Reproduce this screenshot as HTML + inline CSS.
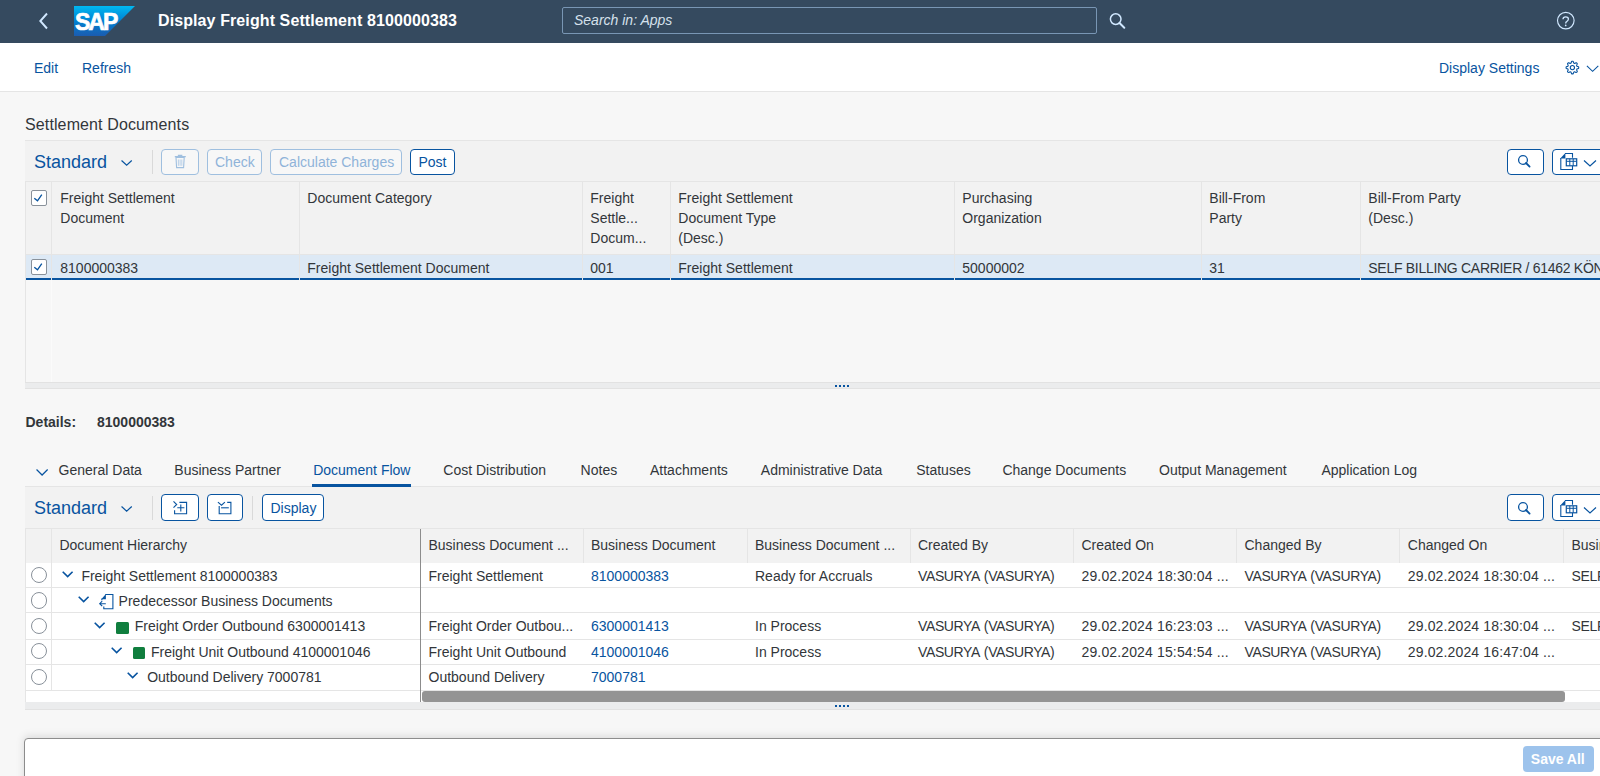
<!DOCTYPE html>
<html><head><meta charset="utf-8">
<style>
*{box-sizing:border-box;margin:0;padding:0}
html,body{width:1600px;height:776px;overflow:hidden;background:#f7f7f7;font-family:"Liberation Sans",sans-serif;color:#32363a}
.a{position:absolute}
.t{position:absolute;white-space:nowrap;font-size:14px;line-height:20px}
</style></head><body>
<div class="a" style="left:0px;top:0px;width:1600px;height:43px;background:#354a5f"></div>
<svg class="a" style="left:36px;top:10px" width="16" height="22" viewBox="0 0 16 22"><path d="M11 3.5 L4.3 11 L11 18.5" fill="none" stroke="#d1e8ff" stroke-width="1.9"/></svg>
<svg class="a" style="left:74px;top:6px" width="62" height="30" viewBox="0 0 62 30">
<defs><linearGradient id="sg" x1="0" y1="0" x2="0" y2="1"><stop offset="0" stop-color="#00b8f1"/><stop offset="0.5" stop-color="#0081d2"/><stop offset="1" stop-color="#1b5cb0"/></linearGradient></defs>
<path d="M0 0 H61 L31 30 H0 Z" fill="url(#sg)"/>
<text x="1" y="24" font-family="Liberation Sans" font-weight="700" font-size="23" fill="#fff" stroke="#fff" stroke-width="0.7" letter-spacing="-2" transform="scale(1,1)">SAP</text>
</svg>
<div class="t" style="left:158px;top:11.06px;font-size:16px;line-height:20px;color:#fff;font-weight:700;letter-spacing:0.1px;">Display Freight Settlement 8100000383</div>
<div class="a" style="left:562px;top:7px;width:535px;height:27px;border:1px solid #7996b4;border-radius:2px"></div>
<div class="t" style="left:574px;top:10.25px;color:#d5e1ec;font-style:italic;">Search in: Apps</div>
<svg class="a" style="left:1106px;top:10px" width="22" height="22" viewBox="0 0 22 22"><circle cx="9.7" cy="9.1" r="5.3" fill="none" stroke="#d1e8ff" stroke-width="1.5"/><path d="M13.5 13 L18.3 17.7" stroke="#d1e8ff" stroke-width="2" stroke-linecap="round"/></svg>
<svg class="a" style="left:1550px;top:5px" width="32" height="32" viewBox="1550 5 32 32"><circle cx="1565.8" cy="20.6" r="8.3" fill="none" stroke="#d1e8ff" stroke-width="1.15"/><path d="M1563 19.2 C1563 17.6 1564.1 16.9 1565.7 16.9 C1567.3 16.9 1568.4 17.8 1568.4 19.1 C1568.4 20.4 1567.4 21 1566.6 21.6 C1565.9 22.1 1565.7 22.6 1565.7 23.6" fill="none" stroke="#d1e8ff" stroke-width="1.3"/><circle cx="1565.7" cy="25.4" r="0.85" fill="#d1e8ff"/></svg>
<div class="a" style="left:0px;top:43px;width:1600px;height:48px;background:#fff"></div>
<div class="a" style="left:0px;top:91px;width:1600px;height:1px;background:#e5e5e5"></div>
<div class="t" style="left:34px;top:57.65px;color:#0854a0;">Edit</div>
<div class="t" style="left:82px;top:57.65px;color:#0854a0;">Refresh</div>
<div class="t" style="left:1439px;top:57.65px;color:#0854a0;">Display Settings</div>
<svg class="a" style="left:1560px;top:55px" width="26" height="26" viewBox="1560 55 26 26"><path d="M1572.40 61.30 L1572.81 61.31 L1573.20 61.49 L1573.47 62.21 L1573.65 62.93 L1573.91 63.15 L1574.20 63.26 L1574.48 63.38 L1574.82 63.41 L1575.46 63.03 L1576.15 62.71 L1576.55 62.86 L1576.85 63.15 L1577.14 63.45 L1577.29 63.85 L1576.97 64.54 L1576.59 65.18 L1576.62 65.52 L1576.74 65.80 L1576.85 66.09 L1577.07 66.35 L1577.79 66.53 L1578.51 66.80 L1578.69 67.19 L1578.70 67.60 L1578.69 68.01 L1578.51 68.40 L1577.79 68.67 L1577.07 68.85 L1576.85 69.11 L1576.74 69.40 L1576.62 69.68 L1576.59 70.02 L1576.97 70.66 L1577.29 71.35 L1577.14 71.75 L1576.85 72.05 L1576.55 72.34 L1576.15 72.49 L1575.46 72.17 L1574.82 71.79 L1574.48 71.82 L1574.20 71.94 L1573.91 72.05 L1573.65 72.27 L1573.47 72.99 L1573.20 73.71 L1572.81 73.89 L1572.40 73.90 L1571.99 73.89 L1571.60 73.71 L1571.33 72.99 L1571.15 72.27 L1570.89 72.05 L1570.60 71.94 L1570.32 71.82 L1569.98 71.79 L1569.34 72.17 L1568.65 72.49 L1568.25 72.34 L1567.95 72.05 L1567.66 71.75 L1567.51 71.35 L1567.83 70.66 L1568.21 70.02 L1568.18 69.68 L1568.06 69.40 L1567.95 69.11 L1567.73 68.85 L1567.01 68.67 L1566.29 68.40 L1566.11 68.01 L1566.10 67.60 L1566.11 67.19 L1566.29 66.80 L1567.01 66.53 L1567.73 66.35 L1567.95 66.09 L1568.06 65.80 L1568.18 65.52 L1568.21 65.18 L1567.83 64.54 L1567.51 63.85 L1567.66 63.45 L1567.95 63.15 L1568.25 62.86 L1568.65 62.71 L1569.34 63.03 L1569.98 63.41 L1570.32 63.38 L1570.60 63.26 L1570.89 63.15 L1571.15 62.93 L1571.33 62.21 L1571.60 61.49 L1571.99 61.31 L1572.40 61.30 Z" fill="none" stroke="#0854a0" stroke-width="1.1" stroke-linejoin="round"/><circle cx="1572.4" cy="67.6" r="2.1" fill="none" stroke="#0854a0" stroke-width="1.1"/></svg>
<svg class="a" style="left:1584px;top:62px" width="16" height="12" viewBox="0 0 16 12"><path d="M2.9 3.9 L8.6 9.3 L14.3 3.9" fill="none" stroke="#0854a0" stroke-width="1.1"/></svg>
<div class="t" style="left:25px;top:115.21px;font-size:16px;line-height:20px;letter-spacing:0.12px;">Settlement Documents</div>
<div class="a" style="left:25px;top:140px;width:1575px;height:2px;background:#e5e5e5"></div>
<div class="a" style="left:25px;top:141px;width:1575px;height:40px;background:#f2f2f2"></div>
<div class="t" style="left:34px;top:149.76px;font-size:18px;line-height:24px;color:#0854a0;">Standard</div>
<svg class="a" style="left:119.3px;top:158.3px" width="15.3" height="9.8" viewBox="0 0 15.3 9.8"><path d="M2.54 2.54 L7.65 7.15 L12.76 2.54" fill="none" stroke="#0854a0" stroke-width="1.2"/></svg>
<div class="a" style="left:152px;top:150px;width:1px;height:24px;background:#d9d9d9"></div>
<div class="a" style="left:161px;top:149px;width:38px;height:26px;border:1px solid #9fbfdf;border-radius:4px;background:rgba(255,255,255,0.4)"></div>
<svg class="a" style="left:172px;top:153px" width="16" height="18" viewBox="0 0 16 18"><path d="M4 4.5 H12.2 L11.6 14.6 H4.6 Z M2.8 3.6 H13.8 M6.4 3.2 V2.4 H9.8 V3.2" fill="none" stroke="#9fbfdf" stroke-width="1.1"/><path d="M6.4 6.5 V12.8 M8.1 6.5 V12.8 M9.8 6.5 V12.8" stroke="#b9d0e8" stroke-width="1"/></svg>
<div class="a" style="left:207px;top:149px;width:55px;height:26px;border:1px solid #9fbfdf;border-radius:4px;background:rgba(255,255,255,0.4)"></div>
<div class="t" style="left:215px;top:152.25px;color:#8fb3d9;">Check</div>
<div class="a" style="left:270px;top:149px;width:132px;height:26px;border:1px solid #9fbfdf;border-radius:4px;background:rgba(255,255,255,0.4)"></div>
<div class="t" style="left:279px;top:152.25px;color:#8fb3d9;">Calculate Charges</div>
<div class="a" style="left:410px;top:149px;width:45px;height:26px;border:1px solid #0854a0;border-radius:4px;background:#fff"></div>
<div class="t" style="left:418.5px;top:152.25px;color:#0854a0;">Post</div>
<div class="a" style="left:1507px;top:149px;width:37px;height:26px;border:1px solid #0854a0;border-radius:4px;background:#fff"></div>
<svg class="a" style="left:1515px;top:154px" width="18" height="16" viewBox="0 0 18 16"><circle cx="8" cy="6" r="4.4" fill="none" stroke="#0854a0" stroke-width="1.3"/><path d="M11 9 L14.6 12.6" stroke="#0854a0" stroke-width="1.8" stroke-linecap="round"/></svg>
<div class="a" style="left:1552px;top:149px;width:60px;height:26px;border:1px solid #0854a0;border-radius:4px;background:#fff"></div>
<svg class="a" style="left:1558px;top:152px" width="42" height="20" viewBox="0 0 42 20"><path d="M7 1.5 H14.5 V5.8 M14.5 14 V17.5 H2.8 V6" fill="none" stroke="#0854a0" stroke-width="1.1"/><path d="M2.2 6.6 L7.4 1 V6.6 Z" fill="#0854a0"/><rect x="8.3" y="6.8" width="10.4" height="7" fill="#fff" stroke="#0854a0" stroke-width="1.2"/><path d="M8.5 9.3 H18.5 M11.8 6.8 V13.8 M15.2 6.8 V13.8" stroke="#0854a0" stroke-width="1"/><path d="M26 8.5 L32 14 L38 8.5" fill="none" stroke="#0854a0" stroke-width="1.2"/></svg>
<div class="a" style="left:25px;top:181px;width:1575px;height:1px;background:#e5e5e5"></div>
<div class="a" style="left:25px;top:182px;width:1575px;height:72px;background:#f2f2f2"></div>
<div class="t" style="left:60.3px;top:188.45px;">Freight Settlement</div>
<div class="t" style="left:60.3px;top:208.45px;">Document</div>
<div class="t" style="left:307.3px;top:188.45px;">Document Category</div>
<div class="t" style="left:590.3px;top:188.45px;">Freight</div>
<div class="t" style="left:590.3px;top:208.45px;">Settle...</div>
<div class="t" style="left:590.3px;top:228.45px;">Docum...</div>
<div class="t" style="left:678.3px;top:188.45px;">Freight Settlement</div>
<div class="t" style="left:678.3px;top:208.45px;">Document Type</div>
<div class="t" style="left:678.3px;top:228.45px;">(Desc.)</div>
<div class="t" style="left:962.3px;top:188.45px;">Purchasing</div>
<div class="t" style="left:962.3px;top:208.45px;">Organization</div>
<div class="t" style="left:1209.3px;top:188.45px;">Bill-From</div>
<div class="t" style="left:1209.3px;top:208.45px;">Party</div>
<div class="t" style="left:1368.3px;top:188.45px;">Bill-From Party</div>
<div class="t" style="left:1368.3px;top:208.45px;">(Desc.)</div>
<div class="a" style="left:25px;top:254px;width:1575px;height:26px;background:#dde9f5"></div>
<div class="a" style="left:25px;top:254px;width:1575px;height:1px;background:#e5e5e5"></div>
<div class="a" style="left:25px;top:278px;width:1575px;height:2px;background:#0854a0"></div>
<div class="t" style="left:60.3px;top:257.65px;">8100000383</div>
<div class="t" style="left:307.3px;top:257.65px;">Freight Settlement Document</div>
<div class="t" style="left:590.3px;top:257.65px;">001</div>
<div class="t" style="left:678.3px;top:257.65px;">Freight Settlement</div>
<div class="t" style="left:962.3px;top:257.65px;">50000002</div>
<div class="t" style="left:1209.3px;top:257.65px;">31</div>
<div class="t" style="left:1368.3px;top:257.65px;letter-spacing:-0.29px;">SELF BILLING CARRIER / 61462 KÖNIGSTEIN</div>
<div class="a" style="left:51px;top:182px;width:1px;height:98px;background:#e5e5e5"></div>
<div class="a" style="left:299px;top:182px;width:1px;height:98px;background:#e5e5e5"></div>
<div class="a" style="left:582px;top:182px;width:1px;height:98px;background:#e5e5e5"></div>
<div class="a" style="left:670px;top:182px;width:1px;height:98px;background:#e5e5e5"></div>
<div class="a" style="left:954px;top:182px;width:1px;height:98px;background:#e5e5e5"></div>
<div class="a" style="left:1201px;top:182px;width:1px;height:98px;background:#e5e5e5"></div>
<div class="a" style="left:1360px;top:182px;width:1px;height:98px;background:#e5e5e5"></div>
<div class="a" style="left:25px;top:280px;width:1575px;height:102px;background:#f7f7f7"></div>
<div class="a" style="left:51px;top:280px;width:1px;height:102px;background:#fbfbfb"></div>
<div class="a" style="left:25px;top:182px;width:1px;height:207px;background:#e5e5e5"></div>
<div class="a" style="left:31px;top:190px;width:16px;height:16px;border:1px solid #89919a;border-radius:2px;background:#fff"></div>
<svg class="a" style="left:31px;top:190px" width="16" height="16" viewBox="0 0 16 16"><path d="M3.3 8.2 L6.5 10.8 L10.8 4.7" fill="none" stroke="#0854a0" stroke-width="1.35"/></svg>
<div class="a" style="left:31px;top:259px;width:16px;height:16px;border:1px solid #89919a;border-radius:2px;background:#fff"></div>
<svg class="a" style="left:31px;top:259px" width="16" height="16" viewBox="0 0 16 16"><path d="M3.3 8.2 L6.5 10.8 L10.8 4.7" fill="none" stroke="#0854a0" stroke-width="1.35"/></svg>
<div class="a" style="left:25px;top:382px;width:1575px;height:7px;background:#ebeced;border-top:1px solid #e2e2e2;border-bottom:1px solid #e2e2e2"></div>
<div class="a" style="left:835px;top:385px;width:2px;height:2px;background:#0854a0"></div>
<div class="a" style="left:839px;top:385px;width:2px;height:2px;background:#0854a0"></div>
<div class="a" style="left:843px;top:385px;width:2px;height:2px;background:#0854a0"></div>
<div class="a" style="left:847px;top:385px;width:2px;height:2px;background:#0854a0"></div>
<div class="t" style="left:25.5px;top:412.15px;font-weight:700;">Details:</div>
<div class="t" style="left:97px;top:412.15px;font-weight:700;">8100000383</div>
<svg class="a" style="left:33.7px;top:466.6px" width="16.2" height="10.7" viewBox="0 0 16.2 10.7"><path d="M2.54 2.54 L8.10 8.05 L13.66 2.54" fill="none" stroke="#0854a0" stroke-width="1.2"/></svg>
<div class="t" style="left:58.6px;top:460.45px;color:#32363a;">General Data</div>
<div class="t" style="left:174.3px;top:460.45px;color:#32363a;">Business Partner</div>
<div class="t" style="left:313.2px;top:460.45px;color:#0854a0;">Document Flow</div>
<div class="t" style="left:443.3px;top:460.45px;color:#32363a;">Cost Distribution</div>
<div class="t" style="left:580.6px;top:460.45px;color:#32363a;">Notes</div>
<div class="t" style="left:650px;top:460.45px;color:#32363a;">Attachments</div>
<div class="t" style="left:760.8px;top:460.45px;color:#32363a;">Administrative Data</div>
<div class="t" style="left:916.2px;top:460.45px;color:#32363a;">Statuses</div>
<div class="t" style="left:1002.4px;top:460.45px;color:#32363a;">Change Documents</div>
<div class="t" style="left:1159px;top:460.45px;color:#32363a;">Output Management</div>
<div class="t" style="left:1321.4px;top:460.45px;color:#32363a;">Application Log</div>
<div class="a" style="left:25px;top:486px;width:1575px;height:1px;background:#e5e5e5"></div>
<div class="a" style="left:312px;top:484px;width:99px;height:3px;background:#0854a0"></div>
<div class="a" style="left:25px;top:487px;width:1575px;height:41px;background:#f2f2f2"></div>
<div class="t" style="left:34px;top:496.26px;font-size:18px;line-height:24px;color:#0854a0;">Standard</div>
<svg class="a" style="left:119.3px;top:504.3px" width="15.3" height="9.8" viewBox="0 0 15.3 9.8"><path d="M2.54 2.54 L7.65 7.15 L12.76 2.54" fill="none" stroke="#0854a0" stroke-width="1.2"/></svg>
<div class="a" style="left:152px;top:496px;width:1px;height:24px;background:#d9d9d9"></div>
<div class="a" style="left:161px;top:494px;width:38px;height:27px;border:1px solid #0854a0;border-radius:4px;background:#fff"></div>
<div class="a" style="left:207px;top:494px;width:36px;height:27px;border:1px solid #0854a0;border-radius:4px;background:#fff"></div>
<svg class="a" style="left:0;top:0" width="260" height="530" viewBox="0 0 260 530"><path d="M173.5 501.3 L176.7 504.5 L173.5 507.7" fill="none" stroke="#0854a0" stroke-width="1.1"/><path d="M179.4 502.4 H186.6 V513.8 H174.6 V510.3" fill="none" stroke="#0854a0" stroke-width="1.1"/><path d="M177.3 507.8 H184.4 M180.8 504.4 V511.4" stroke="#0854a0" stroke-width="1.1"/><path d="M217.9 502.1 L221.5 505.2 L224.9 502.1" fill="none" stroke="#0854a0" stroke-width="1.1"/><path d="M227.2 502.4 H230.9 V513.8 H219.2 V506.1" fill="none" stroke="#0854a0" stroke-width="1.1"/><path d="M221.1 507.8 H228.8" stroke="#0854a0" stroke-width="1.1"/></svg>
<div class="a" style="left:252px;top:496px;width:1px;height:24px;background:#d9d9d9"></div>
<div class="a" style="left:262px;top:494px;width:62px;height:27px;border:1px solid #0854a0;border-radius:4px;background:#fff"></div>
<div class="t" style="left:270.5px;top:498.45px;color:#0854a0;">Display</div>
<div class="a" style="left:1507px;top:494px;width:37px;height:27px;border:1px solid #0854a0;border-radius:4px;background:#fff"></div>
<svg class="a" style="left:1515px;top:501px" width="18" height="16" viewBox="0 0 18 16"><circle cx="8" cy="6" r="4.4" fill="none" stroke="#0854a0" stroke-width="1.3"/><path d="M11 9 L14.6 12.6" stroke="#0854a0" stroke-width="1.8" stroke-linecap="round"/></svg>
<div class="a" style="left:1552px;top:494px;width:60px;height:27px;border:1px solid #0854a0;border-radius:4px;background:#fff"></div>
<svg class="a" style="left:1558px;top:499px" width="42" height="20" viewBox="0 0 42 20"><path d="M7 1.5 H14.5 V5.8 M14.5 14 V17.5 H2.8 V6" fill="none" stroke="#0854a0" stroke-width="1.1"/><path d="M2.2 6.6 L7.4 1 V6.6 Z" fill="#0854a0"/><rect x="8.3" y="6.8" width="10.4" height="7" fill="#fff" stroke="#0854a0" stroke-width="1.2"/><path d="M8.5 9.3 H18.5 M11.8 6.8 V13.8 M15.2 6.8 V13.8" stroke="#0854a0" stroke-width="1"/><path d="M26 8.5 L32 14 L38 8.5" fill="none" stroke="#0854a0" stroke-width="1.2"/></svg>
<div class="a" style="left:25px;top:528px;width:1575px;height:1px;background:#e5e5e5"></div>
<div class="a" style="left:25px;top:529px;width:1575px;height:34px;background:#f2f2f2"></div>
<div class="t" style="left:59.4px;top:535.15px;">Document Hierarchy</div>
<div class="t" style="left:428.5px;top:535.15px;">Business Document ...</div>
<div class="t" style="left:591.0px;top:535.15px;">Business Document</div>
<div class="t" style="left:755.0px;top:535.15px;">Business Document ...</div>
<div class="t" style="left:918.0px;top:535.15px;">Created By</div>
<div class="t" style="left:1081.5px;top:535.15px;">Created On</div>
<div class="t" style="left:1244.5px;top:535.15px;">Changed By</div>
<div class="t" style="left:1407.8px;top:535.15px;">Changed On</div>
<div class="t" style="left:1571.5px;top:535.15px;">Business Partner</div>
<div class="a" style="left:25px;top:563px;width:1575px;height:139px;background:#fff"></div>
<div class="a" style="left:25px;top:587px;width:1575px;height:1px;background:#e5e5e5"></div>
<div class="a" style="left:25px;top:612px;width:1575px;height:1px;background:#e5e5e5"></div>
<div class="a" style="left:25px;top:639px;width:1575px;height:1px;background:#e5e5e5"></div>
<div class="a" style="left:25px;top:664px;width:1575px;height:1px;background:#e5e5e5"></div>
<div class="a" style="left:25px;top:690px;width:1575px;height:1px;background:#e5e5e5"></div>
<div class="t" style="left:428.5px;top:565.95px;">Freight Settlement</div>
<div class="t" style="left:591.0px;top:565.95px;color:#0854a0;">8100000383</div>
<div class="t" style="left:755.0px;top:565.95px;">Ready for Accruals</div>
<div class="t" style="left:918.0px;top:565.95px;letter-spacing:-0.38px;word-spacing:1.2px;">VASURYA (VASURYA)</div>
<div class="t" style="left:1081.5px;top:565.95px;letter-spacing:0.14px;">29.02.2024 18:30:04 ...</div>
<div class="t" style="left:1244.5px;top:565.95px;letter-spacing:-0.38px;word-spacing:1.2px;">VASURYA (VASURYA)</div>
<div class="t" style="left:1407.8px;top:565.95px;letter-spacing:0.14px;">29.02.2024 18:30:04 ...</div>
<div class="t" style="left:1571.5px;top:565.95px;letter-spacing:-0.29px;">SELF BILLING</div>
<div class="t" style="left:428.5px;top:616.45px;">Freight Order Outbou...</div>
<div class="t" style="left:591.0px;top:616.45px;color:#0854a0;">6300001413</div>
<div class="t" style="left:755.0px;top:616.45px;">In Process</div>
<div class="t" style="left:918.0px;top:616.45px;letter-spacing:-0.38px;word-spacing:1.2px;">VASURYA (VASURYA)</div>
<div class="t" style="left:1081.5px;top:616.45px;letter-spacing:0.14px;">29.02.2024 16:23:03 ...</div>
<div class="t" style="left:1244.5px;top:616.45px;letter-spacing:-0.38px;word-spacing:1.2px;">VASURYA (VASURYA)</div>
<div class="t" style="left:1407.8px;top:616.45px;letter-spacing:0.14px;">29.02.2024 18:30:04 ...</div>
<div class="t" style="left:1571.5px;top:616.45px;letter-spacing:-0.29px;">SELF BILLING</div>
<div class="t" style="left:428.5px;top:641.55px;">Freight Unit Outbound</div>
<div class="t" style="left:591.0px;top:641.55px;color:#0854a0;">4100001046</div>
<div class="t" style="left:755.0px;top:641.55px;">In Process</div>
<div class="t" style="left:918.0px;top:641.55px;letter-spacing:-0.38px;word-spacing:1.2px;">VASURYA (VASURYA)</div>
<div class="t" style="left:1081.5px;top:641.55px;letter-spacing:0.14px;">29.02.2024 15:54:54 ...</div>
<div class="t" style="left:1244.5px;top:641.55px;letter-spacing:-0.38px;word-spacing:1.2px;">VASURYA (VASURYA)</div>
<div class="t" style="left:1407.8px;top:641.55px;letter-spacing:0.14px;">29.02.2024 16:47:04 ...</div>
<div class="t" style="left:428.5px;top:666.95px;">Outbound Delivery</div>
<div class="t" style="left:591.0px;top:666.95px;color:#0854a0;">7000781</div>
<svg class="a" style="left:60px;top:568.6999999999999px" width="15.3" height="10.5" viewBox="0 0 15.3 10.5"><path d="M2.72 2.72 L7.65 7.64 L12.58 2.72" fill="none" stroke="#0854a0" stroke-width="1.6"/></svg>
<div class="t" style="left:81.4px;top:565.95px;">Freight Settlement 8100000383</div>
<div class="a" style="left:30.9px;top:567.1999999999999px;width:16.2px;height:16.2px;border:1px solid #89919a;border-radius:50%;background:#fff"></div>
<svg class="a" style="left:76px;top:593.9px" width="15.3" height="10.5" viewBox="0 0 15.3 10.5"><path d="M2.72 2.72 L7.65 7.64 L12.58 2.72" fill="none" stroke="#0854a0" stroke-width="1.6"/></svg>
<svg class="a" style="left:95px;top:588px" width="22" height="25" viewBox="95 588 22 25"><path d="M105.3 594.5 H112.9 V608.7 H103.8 V606.4 M101.9 598.4 V600.3" fill="none" stroke="#0854a0" stroke-width="1.1" transform="translate(0,0)"/><path d="M101.3 599.2 L105.9 594 V599.2 Z" fill="#0854a0" transform="translate(0,0)"/><path d="M100 603.7 H105.8 M102.2 601.2 L99.7 603.7 L102.2 606.2" fill="none" stroke="#0854a0" stroke-width="1.1" transform="translate(0,0)"/></svg>
<div class="t" style="left:118.6px;top:590.65px;">Predecessor Business Documents</div>
<div class="a" style="left:30.9px;top:592.4px;width:16.2px;height:16.2px;border:1px solid #89919a;border-radius:50%;background:#fff"></div>
<svg class="a" style="left:92.2px;top:619.5px" width="15.3" height="10.5" viewBox="0 0 15.3 10.5"><path d="M2.72 2.72 L7.65 7.64 L12.58 2.72" fill="none" stroke="#0854a0" stroke-width="1.6"/></svg>
<div class="a" style="left:116.30000000000001px;top:621.7px;width:12.3px;height:12.3px;background:#107e3e;border-radius:1.5px"></div>
<div class="t" style="left:134.8px;top:616.45px;">Freight Order Outbound 6300001413</div>
<div class="a" style="left:30.9px;top:618.0px;width:16.2px;height:16.2px;border:1px solid #89919a;border-radius:50%;background:#fff"></div>
<svg class="a" style="left:108.7px;top:644.6999999999999px" width="15.3" height="10.5" viewBox="0 0 15.3 10.5"><path d="M2.72 2.72 L7.65 7.64 L12.58 2.72" fill="none" stroke="#0854a0" stroke-width="1.6"/></svg>
<div class="a" style="left:132.5px;top:646.9px;width:12.3px;height:12.3px;background:#107e3e;border-radius:1.5px"></div>
<div class="t" style="left:151px;top:641.55px;">Freight Unit Outbound 4100001046</div>
<div class="a" style="left:30.9px;top:643.1999999999999px;width:16.2px;height:16.2px;border:1px solid #89919a;border-radius:50%;background:#fff"></div>
<svg class="a" style="left:125.2px;top:670.3px" width="15.3" height="10.5" viewBox="0 0 15.3 10.5"><path d="M2.72 2.72 L7.65 7.64 L12.58 2.72" fill="none" stroke="#0854a0" stroke-width="1.6"/></svg>
<div class="t" style="left:147.2px;top:666.95px;">Outbound Delivery 7000781</div>
<div class="a" style="left:30.9px;top:668.8px;width:16.2px;height:16.2px;border:1px solid #89919a;border-radius:50%;background:#fff"></div>
<div class="a" style="left:51px;top:529px;width:1px;height:34px;background:#e5e5e5"></div>
<div class="a" style="left:419.5px;top:529px;width:1px;height:173px;background:#8c8c8c"></div>
<div class="a" style="left:582.5px;top:529px;width:1px;height:34px;background:#e5e5e5"></div>
<div class="a" style="left:746.5px;top:529px;width:1px;height:34px;background:#e5e5e5"></div>
<div class="a" style="left:909.5px;top:529px;width:1px;height:34px;background:#e5e5e5"></div>
<div class="a" style="left:1073px;top:529px;width:1px;height:34px;background:#e5e5e5"></div>
<div class="a" style="left:1236px;top:529px;width:1px;height:34px;background:#e5e5e5"></div>
<div class="a" style="left:1399.3px;top:529px;width:1px;height:34px;background:#e5e5e5"></div>
<div class="a" style="left:1563px;top:529px;width:1px;height:34px;background:#e5e5e5"></div>
<div class="a" style="left:51px;top:563px;width:1px;height:127px;background:#e5e5e5"></div>
<div class="a" style="left:25px;top:529px;width:1px;height:181px;background:#e5e5e5"></div>
<div class="a" style="left:422px;top:691px;width:1143px;height:11px;background:#949494;border-radius:3px"></div>
<div class="a" style="left:25px;top:702px;width:1575px;height:8px;background:#ebeced;border-bottom:1px solid #e2e2e2"></div>
<div class="a" style="left:835px;top:705px;width:2px;height:2px;background:#0854a0"></div>
<div class="a" style="left:839px;top:705px;width:2px;height:2px;background:#0854a0"></div>
<div class="a" style="left:843px;top:705px;width:2px;height:2px;background:#0854a0"></div>
<div class="a" style="left:847px;top:705px;width:2px;height:2px;background:#0854a0"></div>
<div class="a" style="left:24px;top:738px;width:1600px;height:60px;background:#fff;border:1px solid #8c8c8c;border-radius:4px 0 0 0;box-shadow:0 -2px 8px rgba(0,0,0,0.12)"></div>
<div class="a" style="left:1523px;top:746px;width:70.5px;height:26px;background:#9dc3ec;border-radius:4px"></div>
<div class="t" style="left:1530.8px;top:749.05px;color:#fff;font-weight:700;">Save All</div>
</body></html>
